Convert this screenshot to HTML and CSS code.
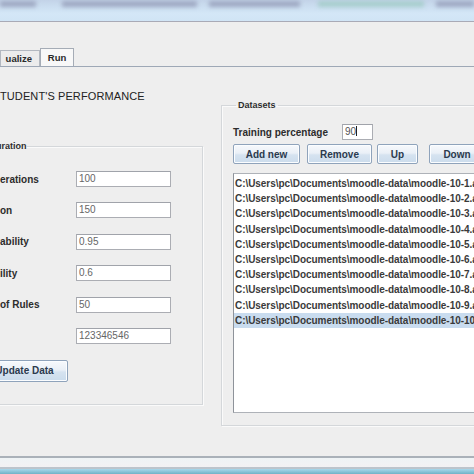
FILE: index.html
```html
<!DOCTYPE html>
<html>
<head>
<meta charset="utf-8">
<link rel="stylesheet" href="styles.css">
</head>
<body>
<div class="window">
  <div class="titlebar">
    <span class="blur b1"></span><span class="blur b2"></span><span class="blur b3"></span><span class="blur b4"></span><span class="blur b5"></span>
  </div>
  <div class="client">
    <div class="tabs">
      <div class="tab">ualize</div>
      <div class="tab selected">Run</div>
    </div>
    <div class="main">
      <div class="left">
        <div class="heading">TUDENT'S PERFORMANCE</div>
        <fieldset class="group config">
          <legend class="legend-left">uration</legend>
          <div class="form">
            <label class="lbl">erations</label><div class="field">100</div>
            <label class="lbl">on</label><div class="field">150</div>
            <label class="lbl">ability</label><div class="field">0.95</div>
            <label class="lbl">ility</label><div class="field">0.6</div>
            <label class="lbl">of Rules</label><div class="field">50</div>
            <label class="lbl"></label><div class="field">123346546</div>
          </div>
          <button class="btn update">Update Data</button>
        </fieldset>
      </div>
      <div class="right">
        <fieldset class="group datasets">
          <legend>Datasets</legend>
          <div class="training">
            <span class="lbl">Training percentage</span>
            <span class="field small">90<span class="caret"></span></span>
          </div>
          <div class="buttons">
            <button class="btn add">Add new</button>
            <button class="btn remove">Remove</button>
            <button class="btn up">Up</button>
            <button class="btn down">Down</button>
          </div>
          <div class="list">
            <div class="item">C:\Users\pc\Documents\moodle-data\moodle-10-1.arff</div>
            <div class="item">C:\Users\pc\Documents\moodle-data\moodle-10-2.arff</div>
            <div class="item">C:\Users\pc\Documents\moodle-data\moodle-10-3.arff</div>
            <div class="item">C:\Users\pc\Documents\moodle-data\moodle-10-4.arff</div>
            <div class="item">C:\Users\pc\Documents\moodle-data\moodle-10-5.arff</div>
            <div class="item">C:\Users\pc\Documents\moodle-data\moodle-10-6.arff</div>
            <div class="item">C:\Users\pc\Documents\moodle-data\moodle-10-7.arff</div>
            <div class="item">C:\Users\pc\Documents\moodle-data\moodle-10-8.arff</div>
            <div class="item">C:\Users\pc\Documents\moodle-data\moodle-10-9.arff</div>
            <div class="item sel">C:\Users\pc\Documents\moodle-data\moodle-10-10.arff</div>
          </div>
        </fieldset>
      </div>
    </div>
  </div>
  <div class="statusbar">
    <div class="sb-line"></div>
    <div class="sb-band"></div>
    <div class="sb-line2"></div>
    <div class="taskbar"></div>
  </div>
</div>
</body>
</html>
```
FILE: styles.css
```css
html, body {
  margin: 0;
  padding: 0;
  width: 474px;
  height: 474px;
  overflow: hidden;
  background: #eeeeee;
  font-family: "Liberation Sans", Arial, sans-serif;
}

.window {
  width: 474px;
  height: 474px;
  display: flex;
  flex-direction: column;
  overflow: hidden;
}

.titlebar {
  height: 22px;
  flex: none;
  background: linear-gradient(#c3d3e8 0px, #cde0f2 8px, #d4e7f7 14px, #d0e4f5 21px);
  border-bottom: 1px solid #a9aab6;
  display: flex;
  gap: 12px;
  align-items: flex-start;
  padding-top: 1px;
  box-sizing: border-box;
}

.blur {
  display: block;
  height: 6px;
  filter: blur(2px);
  background: #9098b4;
  opacity: 0.75;
}
.b1 { width: 38px; }
.b2 { width: 140px; margin-left: 14px; }
.b3 { width: 95px; }
.b4 { width: 110px; background: #9ccac2; margin-left: 6px; }
.b5 { width: 40px; }

.client {
  flex: 1;
  display: flex;
  flex-direction: column;
  min-height: 0;
}

.tabs {
  margin-top: 26px;
  height: 18px;
  display: flex;
  align-items: flex-end;
  border-bottom: 1px solid #9ea8b6;
  flex: none;
}

.tab {
  height: 16px;
  box-sizing: border-box;
  border: 1px solid #b3b8c0;
  border-bottom: none;
  background: #ececec;
  font-size: 9.5px;
  font-weight: bold;
  color: #2a2a2a;
  line-height: 15px;
  padding: 0 7px 0 0;
  width: 40px;
  text-align: right;
}
.tab.selected {
  width: 34px;
  height: 18px;
  line-height: 17px;
  background: #f8f8f8;
  border-color: #a5acb6;
  text-align: center;
  padding: 0;
}

.main {
  display: flex;
  flex: 1;
  min-height: 0;
}

.left {
  width: 223px;
  margin-left: -20px;
  flex: none;
  display: flex;
  flex-direction: column;
}

.heading {
  margin-top: 23px;
  margin-left: 20px;
  height: 12px;
  font-size: 11px;
  line-height: 12px;
  color: #222;
  letter-spacing: 0.1px;
}

.group {
  margin: 0;
  padding: 0;
  border: 1px solid #d4d7da;
  box-shadow: inset 1px 1px 0 #fafafa, 1px 1px 0 #fafafa;
}

.group legend {
  font-size: 9px;
  font-weight: bold;
  line-height: 10px;
  height: 10px;
  padding: 0 2px;
  margin-left: 3px;
  color: #2d2d2d;
}

.config {
  margin-top: 39px;
  width: 223px;
  height: 264px;
  box-sizing: border-box;
}

.config .legend-left {
  margin-left: 15px;
  padding: 0;
}

.form {
  display: grid;
  grid-template-columns: 76px 95px;
  row-gap: 15.4px;
  padding-top: 20px;
  padding-left: 19px;
  align-items: center;
}

.lbl {
  font-size: 10px;
  font-weight: bold;
  color: #2c2c2c;
}

.field {
  height: 16px;
  box-sizing: border-box;
  background: #fff;
  border: 1px solid #abadb3;
  border-top-color: #a0a3aa;
  font-size: 10px;
  line-height: 14px;
  color: #666;
  padding-left: 2px;
}

.btn {
  box-sizing: border-box;
  border: 1px solid #8fa3bb;
  border-radius: 2px;
  background: linear-gradient(#f7f9fc 0%, #eaf0f7 45%, #d6e3f0 55%, #cbdcec 100%);
  font-family: "Liberation Sans", Arial, sans-serif;
  font-size: 10px;
  font-weight: bold;
  color: #2b3a4e;
  padding: 0;
  box-shadow: inset 0 0 0 1px #fbfdff;
}

.update {
  margin-top: 16px;
  width: 87px;
  height: 22px;
}

.right {
  flex: none;
  margin-left: 18px;
  width: 300px;
  padding-top: 33px;
}

.datasets {
  width: 300px;
  height: 326px;
  box-sizing: border-box;
  padding: 0 0 0 11px;
}

.training {
  margin-top: 14px;
  height: 16px;
  display: flex;
  align-items: center;
}
.training .lbl {
  width: 109px;
}
.field.small {
  width: 31px;
  display: inline-block;
  color: #555;
}
.caret {
  display: inline-block;
  width: 1px;
  height: 10px;
  background: #222;
  vertical-align: -1px;
}

.buttons {
  margin-top: 4px;
  display: flex;
  height: 20px;
}
.buttons .btn { height: 20px; }
.add { width: 67px; }
.remove { width: 65px; margin-left: 7px; }
.up { width: 41px; margin-left: 5px; }
.down { width: 56px; margin-left: 11px; }

.list {
  margin-top: 9px;
  height: 240px;
  box-sizing: border-box;
  background: #fff;
  border: 1px solid #aeb2b8;
  border-left-color: #8e939a;
  padding-top: 2px;
  width: 280px;
}

.item {
  height: 15.2px;
  line-height: 15.2px;
  font-size: 10px;
  font-weight: bold;
  color: #3a3a3a;
  white-space: nowrap;
  overflow: hidden;
  padding-left: 1px;
  letter-spacing: -0.05px;
}
.item.sel {
  background: #c9dcef;
}

.statusbar {
  flex: none;
  height: 18px;
  display: flex;
  flex-direction: column;
}
.sb-line { height: 2px; background: #aab1b9; }
.sb-band { height: 9px; background: linear-gradient(#eef3f5, #f3f1f3); }
.sb-line2 { height: 2px; background: #bcc4cc; }
.taskbar { flex: 1; background: linear-gradient(#a9d8ec, #6fb2c6); }
```
